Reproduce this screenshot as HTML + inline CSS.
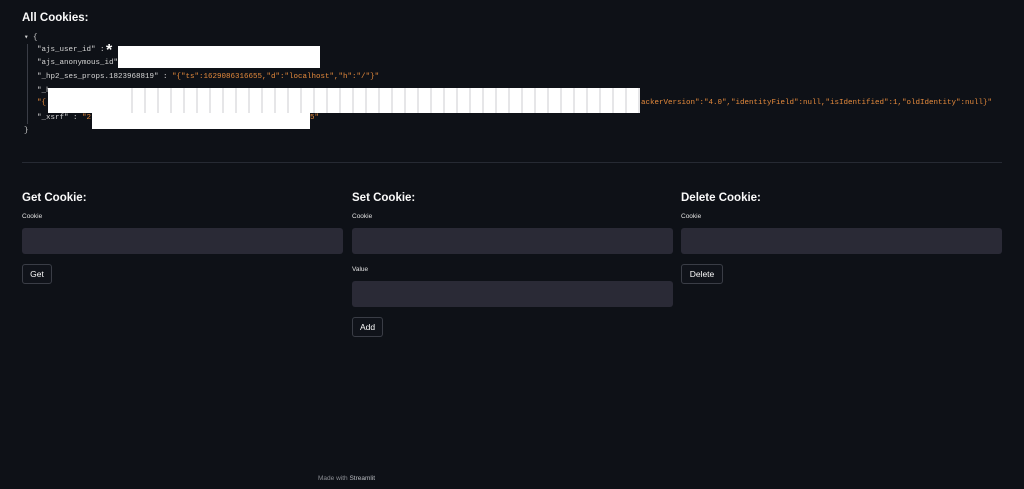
<!DOCTYPE html>
<html><head><style>
body{margin:0;width:1024px;height:489px;background:#0e1117;color:#fafafa;font-family:"Liberation Sans",sans-serif;position:relative;overflow:hidden}
.a{position:absolute}
h{position:absolute;font-weight:bold;font-size:11.5px;color:#fafafa}
.m{position:absolute;font-family:"Liberation Mono",monospace;font-size:7.5px;color:#d6d6d6;white-space:pre}
.o{color:#e58a3c}
.lbl{position:absolute;font-size:6.5px;color:#e0e0e0}
.in{position:absolute;background:#2a2a36;border-radius:3px;height:26px;width:321px}
.btn{position:absolute;border:1px solid #3a3d46;border-radius:3px;height:18px;font-size:8.5px;line-height:18px;text-align:center;color:#fafafa;background:#10131a}
.w{position:absolute;background:#fff}
</style></head><body>
<h style="left:22px;top:12px">All Cookies:</h>
<div class="m" style="left:24px;top:32px">▾ {</div>
<div class="a" style="left:27px;top:44px;width:1px;height:80px;background:#3a3d46"></div>
<div class="m" style="left:37px;top:46px">"ajs_user_id" : </div>
<div class="m" style="left:37px;top:59px">"ajs_anonymous_id"</div>
<div class="m" style="left:37px;top:73px">"_hp2_ses_props.1823968819" : <span class="o">"{"ts":1629086316655,"d":"localhost","h":"/"}"</span></div>
<div class="m" style="left:37px;top:87px">"_h</div>
<div class="m o" style="left:37px;top:99px">"{</div>
<div class="m o" style="left:641px;top:99px">ackerVersion":"4.0","identityField":null,"isIdentified":1,"oldIdentity":null}"</div>
<div class="m" style="left:37px;top:114px">"_xsrf" : <span class="o">"2|</span></div>
<div class="m o" style="left:310px;top:114px">5"</div>
<div class="m" style="left:24px;top:127px">}</div>
<div class="w" style="left:118px;top:46px;width:202px;height:22px"></div>
<div class="a" style="left:106px;top:42px;color:#fff;font-size:16px;font-weight:bold">*</div>
<div class="w" style="left:48px;top:88px;width:592px;height:25px"></div>
<div class="a" style="left:120px;top:88px;width:520px;height:25px;background:repeating-linear-gradient(90deg,transparent 0 11px,#e6e6e8 11px 13px)"></div>
<div class="w" style="left:92px;top:113px;width:218px;height:16px"></div>
<div class="a" style="left:22px;top:162px;width:980px;height:1px;background:#262a33"></div>

<h style="left:22px;top:192px">Get Cookie:</h>
<div class="lbl" style="left:22px;top:213px">Cookie</div>
<div class="in" style="left:22px;top:228px"></div>
<div class="btn" style="left:22px;top:264px;width:28px">Get</div>

<h style="left:352px;top:192px">Set Cookie:</h>
<div class="lbl" style="left:352px;top:213px">Cookie</div>
<div class="in" style="left:352px;top:228px"></div>
<div class="lbl" style="left:352px;top:266px">Value</div>
<div class="in" style="left:352px;top:281px"></div>
<div class="btn" style="left:352px;top:317px;width:29px">Add</div>

<h style="left:681px;top:192px">Delete Cookie:</h>
<div class="lbl" style="left:681px;top:213px">Cookie</div>
<div class="in" style="left:681px;top:228px"></div>
<div class="btn" style="left:681px;top:264px;width:40px">Delete</div>

<div class="a" style="left:318px;top:475px;font-size:6.5px;color:#8a8d93">Made with <span style="color:#b8bbc0">Streamlit</span></div>
</body></html>
